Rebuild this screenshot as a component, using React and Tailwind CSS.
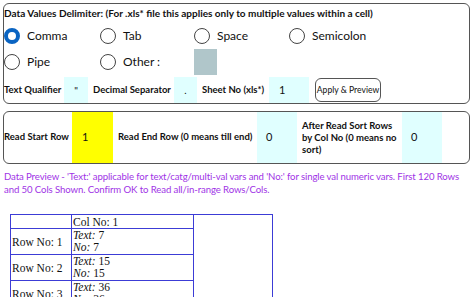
import { useState } from 'react';

const radios = [
  ['Comma', 'Tab', 'Space', 'Semicolon'],
  ['Pipe', 'Other :'],
];

function Radio({ checked }) {
  return checked ? (
    <span className="w-[16px] h-[16px] rounded-full border-[4px] border-[#0a64c2] bg-white shrink-0" />
  ) : (
    <span className="w-[16px] h-[16px] rounded-full border border-[#444] bg-white shrink-0" />
  );
}

export default function App() {
  const [delim, setDelim] = useState('Comma');

  return (
    <div className="w-[474px] h-[297px] overflow-hidden bg-white text-[#111] font-['Lato',sans-serif]">
      {/* Delimiter box */}
      <div className="ml-[3px] mt-[3px] w-[467px] h-[101px] border border-[#555] rounded-[6px] flex flex-col">
        <div className="pt-[3px] text-[10px] font-bold leading-[13px] whitespace-nowrap">
          Data Values Delimiter: (For .xls* file this applies only to multiple values within a cell)
        </div>
        <div className="mt-[3px] flex flex-col">
          {radios.map((row, ri) => (
            <div key={ri} className="flex h-[26px] items-center">
              {row.map((label, i) => (
                <label
                  key={label}
                  onClick={() => setDelim(label)}
                  className={
                    'flex items-center gap-[7px] text-[12px] cursor-pointer ' +
                    (i === 0 ? 'w-[96px]' : i === 1 ? 'w-[94px]' : i === 2 ? 'w-[95px]' : '')
                  }
                >
                  <Radio checked={delim === label} />
                  <span>{label}</span>
                </label>
              ))}
              {ri === 1 && <div className="w-[23px] h-[26px] bg-[#b0c6ca]" />}
            </div>
          ))}
        </div>
        <div className="mt-[2px] flex items-center h-[26px] text-[9.5px] font-bold whitespace-nowrap">
          <span className="w-[60px]">Text Qualifier</span>
          <div className="w-[24px] h-[26px] bg-[#e0ffff] flex items-center justify-center font-normal text-[10px]">"</div>
          <span className="ml-[5px] w-[81px]">Decimal Separator</span>
          <div className="w-[23px] h-[26px] bg-[#e0ffff] flex items-center justify-center font-normal text-[10px]">.</div>
          <span className="ml-[5px] w-[67px]">Sheet No (xls*)</span>
          <div className="w-[40px] h-[26px] bg-[#e0ffff] flex items-center pl-[10px] font-normal text-[11px]">1</div>
          <button className="ml-[6px] w-[66px] h-[24px] border border-[#555] rounded-[6px] bg-white font-normal text-[8.6px] whitespace-nowrap">
            Apply &amp; Preview
          </button>
        </div>
      </div>

      {/* Read rows box */}
      <div className="ml-[3px] mt-[7px] w-[467px] h-[53px] border border-[#555] rounded-[6px] flex items-stretch text-[9.5px] font-bold">
        <span className="w-[68px] self-center whitespace-nowrap">Read Start Row</span>
        <div className="w-[41px] bg-[#ffff00] flex items-center pl-[10px] font-normal text-[11px]">1</div>
        <span className="ml-[5px] w-[139px] self-center whitespace-nowrap">Read End Row (0 means till end)</span>
        <div className="w-[40px] bg-[#e0ffff] flex items-center pl-[9px] font-normal text-[11px]">0</div>
        <span className="ml-[5px] w-[100px] self-center leading-[12px] whitespace-nowrap">
          After Read Sort Rows<br />by Col No (0 means no<br />sort)
        </span>
        <div className="w-[40px] bg-[#e0ffff] flex items-center pl-[9px] font-normal text-[11px]">0</div>
      </div>

      <p className="ml-[4px] mt-[6px] w-[470px] text-[9.6px] tracking-[-0.1px] leading-[13px] text-[#a033e6] whitespace-nowrap">
        Data Preview - 'Text:' applicable for text/catg/multi-val vars and 'No:' for single val numeric vars. First 120 Rows
        <br />
        and 50 Cols Shown. Confirm OK to Read all/in-range Rows/Cols.
      </p>

      <table className="ml-[10px] mt-[18px] border-collapse font-['Liberation_Serif',serif] text-[11.5px] leading-[12px]">
        <tbody>
          <tr className="h-[14px]">
            <td className="w-[61px] border border-[#3c3cd6]" />
            <td className="w-[122px] border border-[#3c3cd6] px-[1px]">Col No: 1</td>
            <td rowSpan={4} className="w-[79px] border border-[#3c3cd6]" />
          </tr>
          {[7, 15, 36].map((v, i) => (
            <tr key={i} className="h-[26px]">
              <td className="border border-[#3c3cd6] px-[1px]">Row No: {i + 1}</td>
              <td className="border border-[#3c3cd6] px-[1px] align-top">
                <div><i>Text:</i> {v}</div>
                <div><i>No:</i> {v}</div>
              </td>
            </tr>
          ))}
        </tbody>
      </table>
    </div>
  );
}
